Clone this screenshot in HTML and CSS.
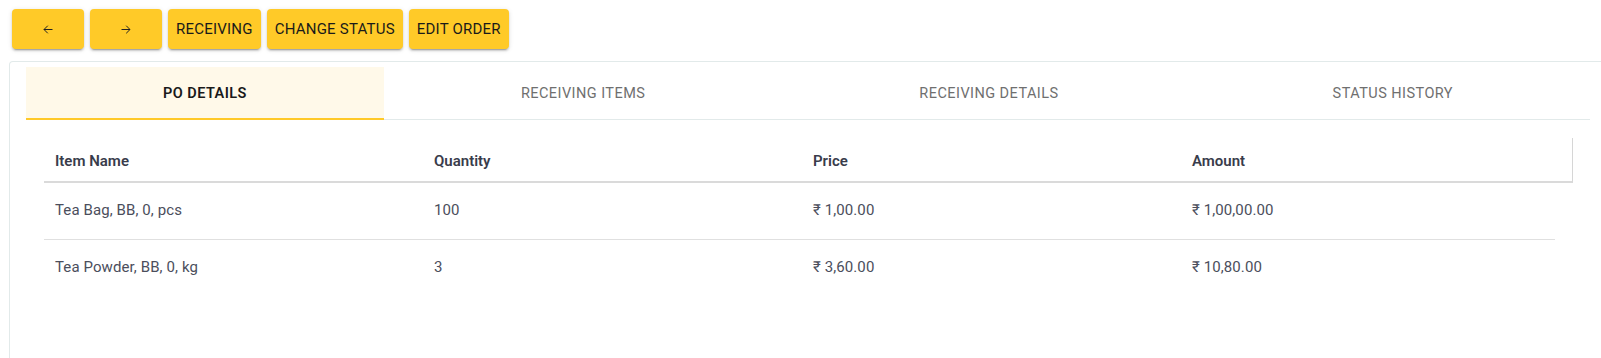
FILE: index.html
```html
<!DOCTYPE html>
<html>
<head>
<meta charset="utf-8">
<link rel="stylesheet" href="styles.css">
</head>
<body>
<div class="page">
  <div class="toolbar">
    <button class="btn btn-icon" aria-label="Back">
      <svg width="10" height="9" viewBox="0 0 10 9"><path d="M9.5 4.5H1M4.8 0.7L1 4.5L4.8 8.3" fill="none" stroke="#222" stroke-width="1"/></svg>
    </button>
    <button class="btn btn-icon" aria-label="Forward">
      <svg width="10" height="9" viewBox="0 0 10 9"><path d="M0.5 4.5H9M5.2 0.7L9 4.5L5.2 8.3" fill="none" stroke="#222" stroke-width="1"/></svg>
    </button>
    <button class="btn">Receiving</button>
    <button class="btn">Change Status</button>
    <button class="btn">Edit Order</button>
  </div>
  <div class="card">
    <div class="tabs">
      <div class="tab active">PO Details</div>
      <div class="tab">Receiving Items</div>
      <div class="tab">Receiving Details</div>
      <div class="tab">Status History</div>
    </div>
    <div class="panel">
      <div class="thead">
        <div class="cell">Item Name</div>
        <div class="cell">Quantity</div>
        <div class="cell">Price</div>
        <div class="cell">Amount</div>
      </div>
      <div class="tbody">
        <div class="row">
          <div class="cell">Tea Bag, BB, 0, pcs</div>
          <div class="cell">100</div>
          <div class="cell">₹ 1,00.00</div>
          <div class="cell">₹ 1,00,00.00</div>
        </div>
        <div class="row">
          <div class="cell">Tea Powder, BB, 0, kg</div>
          <div class="cell">3</div>
          <div class="cell">₹ 3,60.00</div>
          <div class="cell">₹ 10,80.00</div>
        </div>
      </div>
    </div>
  </div>
</div>
</body>
</html>
```
FILE: styles.css
```css
html, body {
  margin: 0;
  padding: 0;
  background: #ffffff;
  overflow: hidden;
}
body {
  font-family: Roboto, "Liberation Sans", Arial, sans-serif;
  font-size: 15px;
}
.page {
  padding: 9px 0 0 9px;
}
.toolbar {
  display: flex;
  gap: 6px;
  padding-left: 3px;
  height: 40px;
}
.btn {
  height: 40px;
  padding: 0 8px;
  border: none;
  border-radius: 4px;
  background: #ffca28;
  color: #1a1a1a;
  font-family: Roboto, "Liberation Sans", Arial, sans-serif;
  font-size: 15px;
  font-weight: 400;
  letter-spacing: 0.22px;
  text-transform: uppercase;
  box-shadow: 0 3px 1px -2px rgba(0,0,0,0.2), 0 2px 2px 0 rgba(0,0,0,0.14), 0 1px 5px 0 rgba(0,0,0,0.12);
  display: flex;
  align-items: center;
  justify-content: center;
  cursor: pointer;
}
.btn-icon {
  width: 72px;
}
.card {
  margin-top: 12px;
  width: 1620px;
  height: 298px;
  border: 1px solid #e2eaea;
  border-bottom: none;
  border-radius: 4px 4px 0 0;
  box-sizing: border-box;
  padding: 5px 0 0 16px;
}
.tabs {
  display: flex;
  width: 1564px;
  height: 52px;
  border-bottom: 1px solid #e2eaea;
}
.tab {
  flex: 1 1 auto;
  position: relative;
  display: flex;
  align-items: center;
  justify-content: center;
  text-transform: uppercase;
  font-size: 14.5px;
  letter-spacing: 0.45px;
  color: #6f6f6f;
  padding-top: 1px;
  box-sizing: border-box;
}
.tab.active {
  background: #fff9e9;
  color: #1a1a1a;
  font-weight: 600;
}
.tab.active::after {
  content: "";
  position: absolute;
  left: 0;
  right: 0;
  bottom: -1px;
  height: 2px;
  background: #ffc928;
}
.panel {
  padding: 18px 0 0 18px;
}
.thead {
  display: grid;
  grid-template-columns: 379px 379px 379px 1fr;
  width: 1528px;
  height: 43px;
  border-bottom: 2px solid #dadada;
  border-right: 1px solid #d6d6d6;
  color: #393c4b;
  font-weight: 600;
}
.thead .cell {
  display: flex;
  align-items: center;
  padding: 2px 0 0 11px;
}
.tbody {
  width: 1511px;
}
.row {
  display: grid;
  grid-template-columns: 379px 379px 379px 1fr;
  height: 56px;
  border-bottom: 1px solid #e0e0e0;
  color: #4b4e5c;
  letter-spacing: 0.1px;
}
.row:last-child {
  border-bottom: none;
}
.row .cell {
  display: flex;
  align-items: center;
  padding: 0 0 3px 11px;
}
```
